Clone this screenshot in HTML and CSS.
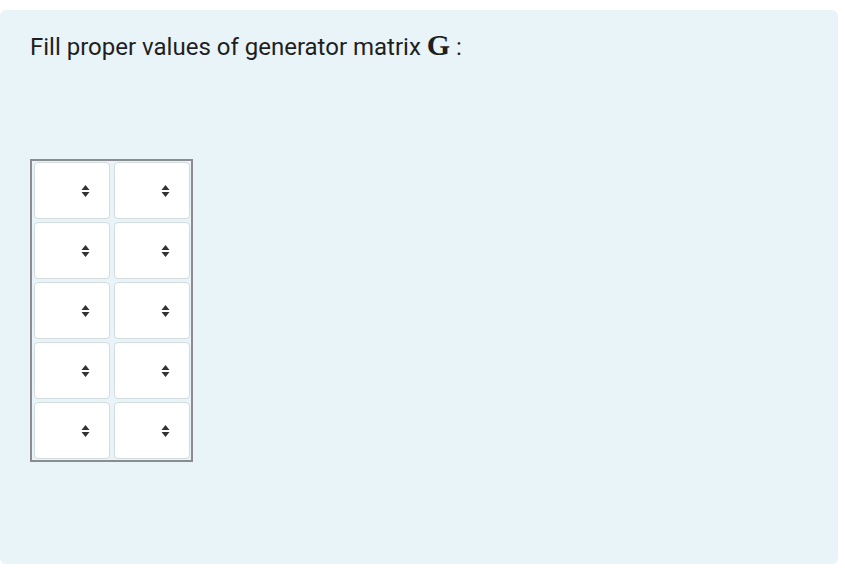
FILE: index.html
```html
<!DOCTYPE html>
<html>
<head>
<meta charset="utf-8">
<link rel="stylesheet" href="styles.css">
</head>
<body>
<div class="card">
  <p class="question">Fill proper values of generator matrix <span class="math">G</span> <span class="colon">:</span></p>
  <div class="matrix">
    <div class="cell"><svg class="arrow" viewBox="0 0 8 12"><path d="M4 0L8 5H0Z M4 12L8 7H0Z"/></svg></div>
    <div class="cell"><svg class="arrow" viewBox="0 0 8 12"><path d="M4 0L8 5H0Z M4 12L8 7H0Z"/></svg></div>
    <div class="cell"><svg class="arrow" viewBox="0 0 8 12"><path d="M4 0L8 5H0Z M4 12L8 7H0Z"/></svg></div>
    <div class="cell"><svg class="arrow" viewBox="0 0 8 12"><path d="M4 0L8 5H0Z M4 12L8 7H0Z"/></svg></div>
    <div class="cell"><svg class="arrow" viewBox="0 0 8 12"><path d="M4 0L8 5H0Z M4 12L8 7H0Z"/></svg></div>
    <div class="cell"><svg class="arrow" viewBox="0 0 8 12"><path d="M4 0L8 5H0Z M4 12L8 7H0Z"/></svg></div>
    <div class="cell"><svg class="arrow" viewBox="0 0 8 12"><path d="M4 0L8 5H0Z M4 12L8 7H0Z"/></svg></div>
    <div class="cell"><svg class="arrow" viewBox="0 0 8 12"><path d="M4 0L8 5H0Z M4 12L8 7H0Z"/></svg></div>
    <div class="cell"><svg class="arrow" viewBox="0 0 8 12"><path d="M4 0L8 5H0Z M4 12L8 7H0Z"/></svg></div>
    <div class="cell"><svg class="arrow" viewBox="0 0 8 12"><path d="M4 0L8 5H0Z M4 12L8 7H0Z"/></svg></div>
  </div>
</div>
</body>
</html>
```
FILE: styles.css
```css
html, body {
  margin: 0;
  padding: 0;
  background: #ffffff;
}
.card {
  margin-top: 10px;
  width: 838px;
  height: 554px;
  box-sizing: border-box;
  background: #e9f4f8;
  border-radius: 6px;
  padding: 20px 0 0 30px;
}
.question {
  margin: 0;
  font-family: Roboto, "Liberation Sans", sans-serif;
  font-size: 24px;
  line-height: 28px;
  height: 30px;
  color: #1f1f1f;
}
.math {
  font-family: "Liberation Serif", serif;
  font-weight: bold;
  font-size: 30px;
  line-height: 1;
  margin-left: 0;
}
.colon {
  margin-left: 0;
}
.matrix {
  margin-top: 99px;
  width: 163px;
  box-sizing: border-box;
  border: 2px solid #8a8d90;
  padding: 1px 2px 1px 2px;
  display: grid;
  grid-template-columns: 76px 76px;
  grid-auto-rows: 57px;
  column-gap: 4px;
  row-gap: 3px;
  background: #e9f4f8;
}
.cell {
  background: #ffffff;
  border: 1px solid #d3dcdf;
  border-radius: 4px;
  display: flex;
  align-items: center;
  justify-content: flex-start;
  padding-left: 46px;
}
.arrow {
  width: 9px;
  height: 12px;
  fill: #333;
}
```
